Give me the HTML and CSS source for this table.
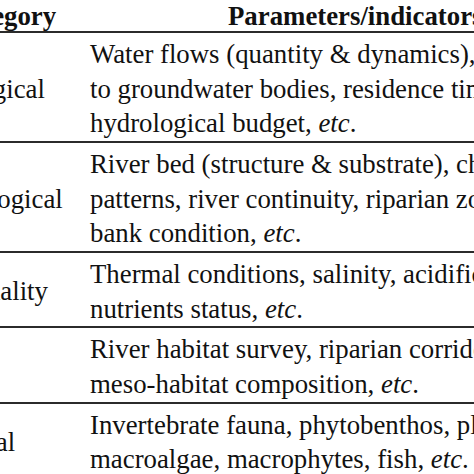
FILE: index.html
```html
<!DOCTYPE html>
<html lang="en">
<head>
<meta charset="utf-8">
<title>Parameters / indicators</title>
<link rel="stylesheet" href="styles.css">
</head>
<body>
<div class="frame">
  <table class="params">
    <colgroup><col class="c-cat"><col class="c-par"></colgroup>
    <thead>
      <tr><th class="h-cat">Category</th><th class="h-par">Parameters/indicators</th></tr>
    </thead>
    <tbody>
      <tr><td class="cat">Hydrological</td><td class="par">Water flows (quantity &amp; dynamics), connection<br>to groundwater bodies, residence time,<br>hydrological budget, <i>etc</i>.</td></tr>
      <tr><td class="cat">Morphological</td><td class="par">River bed (structure &amp; substrate), channel<br>patterns, river continuity, riparian zone,<br>bank condition, <i>etc</i>.</td></tr>
      <tr><td class="cat">Water quality</td><td class="par">Thermal conditions, salinity, acidification,<br>nutrients status, <i>etc</i>.</td></tr>
      <tr><td class="cat">Habitat</td><td class="par">River habitat survey, riparian corridor,<br>meso-habitat composition, <i>etc</i>.</td></tr>
      <tr><td class="cat">Biological</td><td class="par">Invertebrate fauna, phytobenthos, plankton,<br>macroalgae, macrophytes, fish, <i>etc</i>.</td></tr>
    </tbody>
  </table>
</div>
</body>
</html>
```
FILE: styles.css
```css
html, body {
  margin: 0;
  padding: 0;
  background: #fff;
}

.frame {
  width: 474px;
  height: 474px;
  overflow: hidden;
}

.params {
  border-collapse: collapse;
  table-layout: fixed;
  width: 724px;
  margin-left: -104px;
  font-family: "Liberation Serif", "Times New Roman", serif;
  font-size: 26.8px;
  color: #111;
}

.c-cat { width: 188px; }
.c-par { width: 536px; }

.params th,
.params td {
  padding: 4px 0 0;
  white-space: nowrap;
  text-align: left;
  line-height: 34.67px;
  border-bottom: 2px solid #2b2b2b;
}

.params th {
  font-weight: bold;
  line-height: 30px;
  padding-top: 1px;
  vertical-align: bottom;
}

.params .h-cat { padding-left: 54.5px; }
.params .h-par { padding-left: 144px; }

.params .cat {
  padding-left: 7.5px;
  vertical-align: middle;
}

.params .par {
  padding-left: 6px;
  vertical-align: top;
}

.params tbody tr:last-child td {
  border-bottom: none;
}
```
